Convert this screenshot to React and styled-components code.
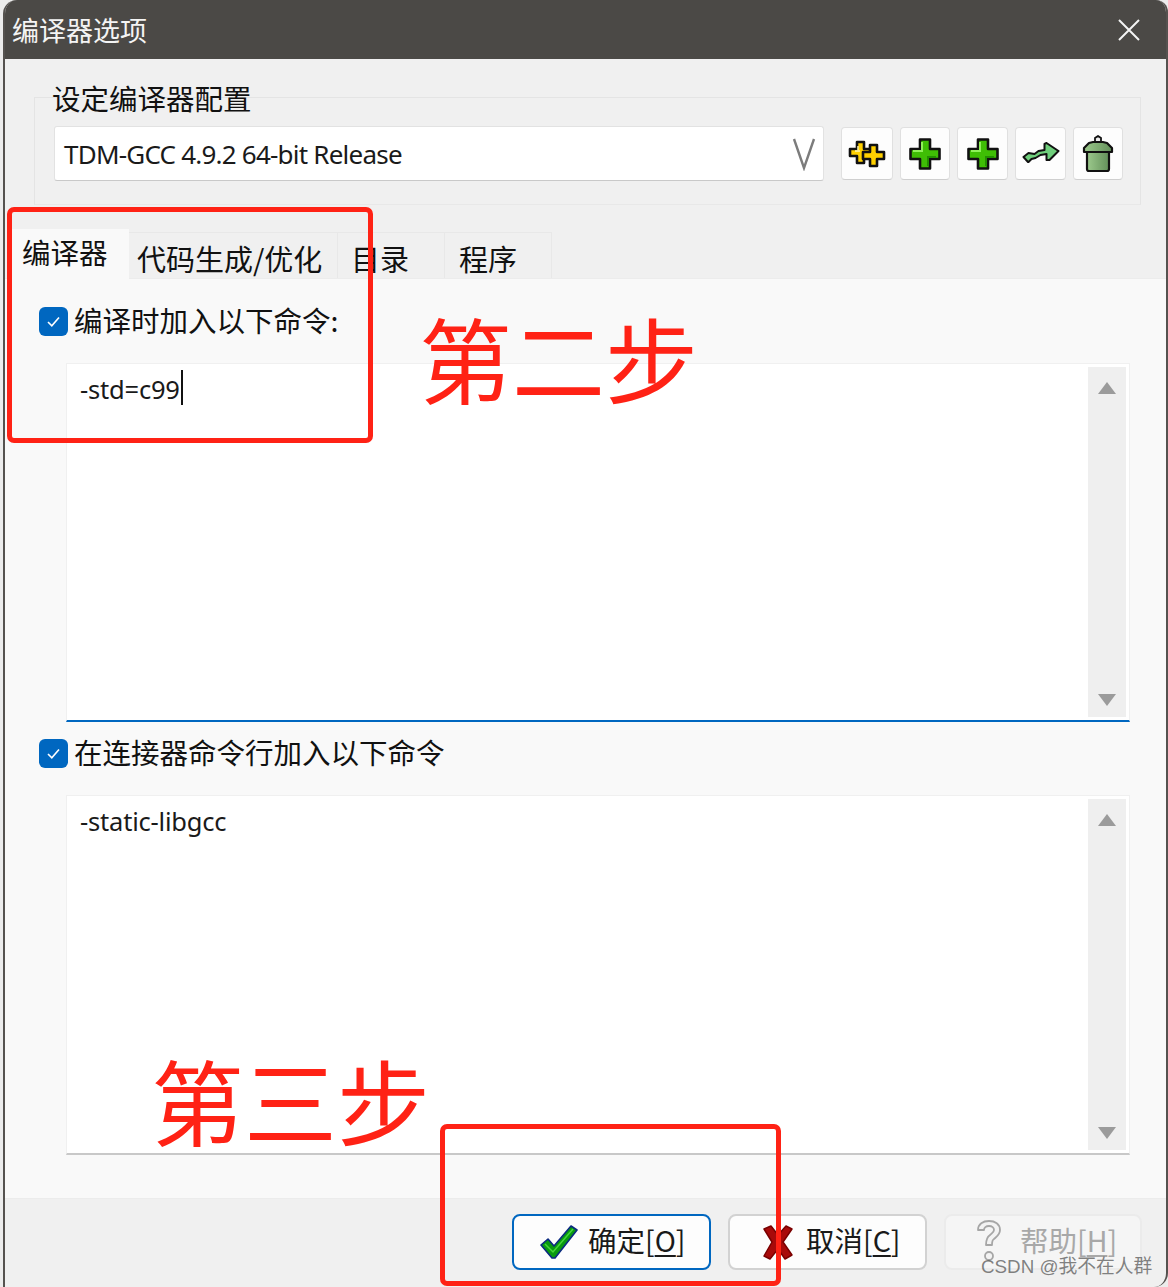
import React from 'react'
import styled, {createGlobalStyle} from 'styled-components'

const CJK = `"Noto Sans CJK SC", "Noto Sans", sans-serif`
const LATIN = `"Noto Sans", "Noto Sans CJK SC", sans-serif`
const RED = '#ff2215'
const BLUE = '#0067c0'

const GlobalStyle = createGlobalStyle`
  html, body {
    margin: 0;
    padding: 0;
    background: #ececec;
    font-family: ${CJK};
    color: #111;
  }
  * { box-sizing: border-box; }
`

const Page = styled.div`
  position: relative;
  width: 1168px;
  height: 1287px;
  overflow: hidden;
  padding-left: 3px;
`

const Dialog = styled.div`
  width: 1165px;
  height: 1287px;
  display: flex;
  flex-direction: column;
  background: #f0f0f0;
  border-left: 2px solid #55524f;
  border-right: 2px solid #55524f;
  border-radius: 14px 12px 14px 0;
  overflow: hidden;
`

const TitleBar = styled.div`
  height: 59px;
  flex: none;
  display: flex;
  align-items: center;
  justify-content: space-between;
  margin: 0 -2px;
  padding: 0 28px 0 9px;
  background: #4b4946;
  color: #f4f4f4;
  font-size: 27px;
`

const TitleText = styled.div`
  line-height: 58px;
`

const CloseIcon = styled.svg`
  width: 22px;
  height: 22px;
  display: block;
`

const GroupBox = styled.div`
  flex: none;
  height: 108px;
  margin: 38px 0 0 29px;
  width: 1107px;
  border: 1px solid #e4e4e4;
  border-bottom-color: #e8e8e8;
`

const Legend = styled.div`
  height: 30px;
  margin: -15px 0 0 17px;
  font-size: 28.5px;
  line-height: 30px;
  white-space: nowrap;
`

const ConfigRow = styled.div`
  display: flex;
  margin: 13px 0 0 19px;
  gap: 7px;
  align-items: flex-start;
`

const ComboBox = styled.div`
  width: 770px;
  height: 55px;
  margin-right: 10px;
  display: flex;
  align-items: center;
  justify-content: space-between;
  padding: 0 7px 0 9px;
  background: #fff;
  border: 1px solid #e2e2e2;
  border-bottom-color: #c9c9c9;
  border-radius: 3px;
  font-family: ${LATIN};
  font-size: 26px;
  letter-spacing: -0.78px;
  color: #1a1a1a;
`

const ToolButton = styled.div`
  width: ${props => props.$width}px;
  height: 53px;
  margin-top: 1px;
  display: flex;
  align-items: center;
  justify-content: center;
  background: #fdfdfd;
  border: 1px solid #e0e0e0;
  border-bottom-color: #cfcfcf;
  border-radius: 4px;
`

const TabBar = styled.div`
  flex: none;
  height: 49px;
  margin-top: 24px;
  display: flex;
  align-items: flex-end;
  padding-left: 3px;
  position: relative;
  z-index: 1;
`

const Tab = styled.div`
  width: ${props => props.$width}px;
  height: ${props => props.$active ? 52 : 46}px;
  margin-bottom: ${props => props.$active ? -3 : 0}px;
  padding-left: ${props => props.$pad}px;
  background: ${props => props.$active ? '#f9f9f9' : '#f0f0f0'};
  border: 1px solid ${props => props.$active ? '#f9f9f9' : '#e8e8e8'};
  border-left-width: ${props => props.$active ? 1 : 0}px;
  border-bottom: none;
  font-size: ${props => props.$active ? 28.5 : 29}px;
  line-height: ${props => props.$active ? 44 : 50}px;
  white-space: nowrap;
`

const Panel = styled.div`
  flex: none;
  height: 920px;
  padding-top: 28px;
  background: #f9f9f9;
  border-top: 1px solid #ececec;
`

const CheckRow = styled.div`
  height: 29px;
  display: flex;
  align-items: center;
  gap: 6px;
  margin-left: 34px;
  margin-top: ${props => props.$top || 0}px;
  font-size: 28.5px;
  white-space: nowrap;
`

const CheckLabel = styled.span`
  padding-bottom: 4px;
`

const CheckBox = styled.div`
  width: 29px;
  height: 29px;
  display: flex;
  align-items: center;
  justify-content: center;
  background: ${BLUE};
  border-radius: 6px;
`

const Editor = styled.div`
  width: 1064px;
  height: ${props => props.$height}px;
  margin: 27px 0 0 61px;
  display: flex;
  background: #fff;
  border: 1px solid #f0f0f0;
  border-bottom: 2px solid ${props => props.$focused ? BLUE : '#c8c8c8'};
`

const EditorText = styled.div`
  flex: 1;
  padding: 7px 0 0 13px;
  font-family: ${LATIN};
  font-size: 25.5px;
  letter-spacing: -0.2px;
  line-height: 36px;
  color: #1a1a1a;
  display: flex;
  align-items: flex-start;
`

const Caret = styled.span`
  display: block;
  width: 2px;
  height: 35px;
  margin: -1px 0 0 1px;
  background: #111;
`

const ScrollTrack = styled.div`
  width: 38px;
  margin: 3px 3px 3px 0;
  display: flex;
  flex-direction: column;
  align-items: center;
  justify-content: space-between;
  padding: 15px 0 11px;
  background: #efefef;
`

const Arrow = styled.div`
  width: 0;
  height: 0;
  border-left: 9px solid transparent;
  border-right: 9px solid transparent;
  ${props => props.$down
    ? 'border-top: 12px solid #9b9b9b;'
    : 'border-bottom: 12px solid #9b9b9b;'}
`

const Footer = styled.div`
  flex: 1;
  display: flex;
  justify-content: flex-end;
  gap: 17px;
  padding: 15px 24px 0 0;
  border-top: 1px solid #ececec;
`

const ActionButton = styled.div`
  width: ${props => props.$width}px;
  height: 56px;
  display: flex;
  align-items: center;
  gap: ${props => props.$gap}px;
  padding-left: ${props => props.$pad}px;
  background: ${props => props.$disabled ? '#f5f5f5' : '#fdfdfd'};
  border: 2px solid ${props => props.$primary ? BLUE : props.$disabled ? '#ebebeb' : '#d2d2d2'};
  border-radius: 8px;
  font-size: 28.5px;
  color: ${props => props.$disabled ? '#a8a8a8' : '#1a1a1a'};
  white-space: nowrap;
`

const ActionLabel = styled.span`
  padding-bottom: 5px;
`

const Mnemonic = styled.span`
  text-decoration: underline;
  text-underline-offset: 3px;
  text-decoration-thickness: 2px;
`

const BoxMark = styled.div`
  position: absolute;
  left: ${props => props.$x}px;
  top: ${props => props.$y}px;
  width: ${props => props.$w}px;
  height: ${props => props.$h}px;
  border: 5px solid ${RED};
  border-radius: 7px;
  z-index: 3;
`

const StepMark = styled.div`
  position: absolute;
  left: ${props => props.$x}px;
  top: ${props => props.$y}px;
  font-family: ${CJK};
  font-size: 93px;
  line-height: 90px;
  font-weight: 400;
  color: ${RED};
  white-space: nowrap;
  z-index: 3;
`

const Watermark = styled.div`
  position: absolute;
  left: 981px;
  top: 1254px;
  font-family: "Liberation Sans", ${CJK};
  font-size: 18.8px;
  line-height: 26px;
  color: rgba(90, 90, 90, 0.75);
  white-space: nowrap;
  z-index: 4;
`

const TickIcon = () => (
  <svg width="15" height="13" viewBox="0 0 15 13">
    <path d="M2 7l3.800 3.800L13 2.500" fill="none" stroke="#fff" strokeWidth="1.600" />
  </svg>
)

const YellowCross = ({x, y}) => (
  <path
    d={`M${x + 7} ${y}h7v7h7v7h-7v7h-7v-7h-7v-7h7z`}
    fill="#ffd000"
    stroke="#111"
    strokeWidth="2.600"
    strokeLinejoin="round"
  />
)

const DoubleCrossIcon = () => (
  <svg width="38" height="28" viewBox="0 0 38 28">
    <YellowCross x={2} y={2} />
    <YellowCross x={15} y={5} />
    <path d="M10 6v4M7 11h5" stroke="#fff6b0" strokeWidth="1.500" />
  </svg>
)

const PlusIcon = () => (
  <svg width="32" height="32" viewBox="0 0 32 32">
    <path d="M11 1.500h10v9.500h9.500v10H21v9.500H11V21H1.500V11H11z" fill="#3fbe05" stroke="#111" strokeWidth="2.600" strokeLinejoin="round" />
    <path d="M13 4v9H4" fill="none" stroke="#8ff05a" strokeWidth="2" />
    <path d="M27 19H19v9" fill="none" stroke="#239000" strokeWidth="2" />
  </svg>
)

const RenameIcon = () => (
  <svg width="38" height="24" viewBox="0 0 38 24">
    <path d="M1.500 15l5-4 6 1 4-3 6-1V2l2-1 12 8-9 9h-3v-6l-6 1-5 3-4 1-3 3H6z" fill="#6fcf7c" stroke="#111" strokeWidth="2" strokeLinejoin="round" />
  </svg>
)

const TrashIcon = () => (
  <svg width="32" height="38" viewBox="0 0 32 38">
    <defs>
      <linearGradient id="trashBody" x1="0" x2="1" y1="0" y2="0">
        <stop offset="0" stopColor="#9cc98c" />
        <stop offset="1" stopColor="#63905a" />
      </linearGradient>
    </defs>
    <path d="M13 7V3l3-2 3 2v4" fill="#eee" stroke="#111" strokeWidth="1.800" />
    <path d="M5 17h22v17a2 2 0 0 1-2 2H7a2 2 0 0 1-2-2z" fill="url(#trashBody)" stroke="#111" strokeWidth="2.200" />
    <path d="M2 13l5-5 4-1h10l4 1 5 5v4H2z" fill="url(#trashBody)" stroke="#111" strokeWidth="2.200" strokeLinejoin="round" />
  </svg>
)

const OkIcon = () => (
  <svg width="38" height="34" viewBox="0 0 38 34">
    <path d="M1 20l7-6 6 7L31 1l6 4-22 28h-3z" fill="#0a9a10" stroke="#0b2a80" strokeWidth="1.600" strokeLinejoin="round" />
    <path d="M5 19l8 8L33 4" fill="none" stroke="#46d838" strokeWidth="1.500" />
  </svg>
)

const CancelIcon = () => (
  <svg width="32" height="36" viewBox="0 0 32 36">
    <path d="M2 5l7-3 7 9 8-9 6 3-9 13 9 13-7 4-7-10-8 10-6-3 8-14z" fill="#a80a0a" stroke="#7a0000" strokeWidth="1.500" strokeLinejoin="round" />
  </svg>
)

const HelpIcon = () => (
  <svg width="26" height="46" viewBox="0 0 26 46">
    <path d="M2 11C2 5 7 2 13 2s11 3 11 9c0 5-4 7-6 9-2 1-2 3-2 6h-6c0-5 1-8 4-10 2-2 4-3 4-5s-2-4-5-4-5 2-5 4z" fill="#f3f3f3" stroke="#a6a6a6" strokeWidth="1.800" strokeLinejoin="round" />
    <circle cx="13" cy="37" r="4" fill="#f3f3f3" stroke="#a6a6a6" strokeWidth="1.800" />
  </svg>
)

const App = () => {
  return (
    <Page>
      <GlobalStyle />
      <Dialog>
        <TitleBar>
          <TitleText>编译器选项</TitleText>
          <CloseIcon viewBox="0 0 22 22">
            <path d="M1 1l20 20M21 1L1 21" stroke="#f4f4f4" strokeWidth="2" />
          </CloseIcon>
        </TitleBar>

        <GroupBox>
          <Legend>设定编译器配置</Legend>
          <ConfigRow>
            <ComboBox>
              TDM-GCC 4.9.2 64-bit Release
              <svg width="24" height="34" viewBox="0 0 24 34">
                <path d="M2 2l10 29L22 2" fill="none" stroke="#7c7c7c" strokeWidth="2.400" />
              </svg>
            </ComboBox>
            <ToolButton $width={52}><DoubleCrossIcon /></ToolButton>
            <ToolButton $width={50}><PlusIcon /></ToolButton>
            <ToolButton $width={51}><PlusIcon /></ToolButton>
            <ToolButton $width={51}><RenameIcon /></ToolButton>
            <ToolButton $width={50}><TrashIcon /></ToolButton>
          </ConfigRow>
        </GroupBox>

        <TabBar>
          <Tab $active $width={121} $pad={13}>编译器</Tab>
          <Tab $width={209} $pad={8}>代码生成/优化</Tab>
          <Tab $width={107} $pad={13}>目录</Tab>
          <Tab $width={107} $pad={14}>程序</Tab>
        </TabBar>

        <Panel>
          <CheckRow>
            <CheckBox><TickIcon /></CheckBox>
            <CheckLabel>编译时加入以下命令:</CheckLabel>
          </CheckRow>
          <Editor $focused $height={359}>
            <EditorText>-std=c99<Caret /></EditorText>
            <ScrollTrack>
              <Arrow />
              <Arrow $down />
            </ScrollTrack>
          </Editor>
          <CheckRow $top={17}>
            <CheckBox><TickIcon /></CheckBox>
            <CheckLabel>在连接器命令行加入以下命令</CheckLabel>
          </CheckRow>
          <Editor $height={360}>
            <EditorText>-static-libgcc</EditorText>
            <ScrollTrack>
              <Arrow />
              <Arrow $down />
            </ScrollTrack>
          </Editor>
        </Panel>

        <Footer>
          <ActionButton $primary $width={199} $pad={26} $gap={10}>
            <OkIcon />
            <ActionLabel>确定[<Mnemonic>O</Mnemonic>]</ActionLabel>
          </ActionButton>
          <ActionButton $width={199} $pad={32} $gap={12}>
            <CancelIcon />
            <ActionLabel>取消[<Mnemonic>C</Mnemonic>]</ActionLabel>
          </ActionButton>
          <ActionButton $disabled $width={198} $pad={30} $gap={18}>
            <HelpIcon />
            <ActionLabel>帮助[<Mnemonic>H</Mnemonic>]</ActionLabel>
          </ActionButton>
        </Footer>
      </Dialog>

      <BoxMark $x={7} $y={207} $w={366} $h={236} />
      <BoxMark $x={440} $y={1124} $w={341} $h={162} />
      <StepMark $x={419} $y={312}>第二步</StepMark>
      <StepMark $x={151} $y={1054}>第三步</StepMark>
      <Watermark>CSDN @我不在人群</Watermark>
    </Page>
  )
}

export default App
